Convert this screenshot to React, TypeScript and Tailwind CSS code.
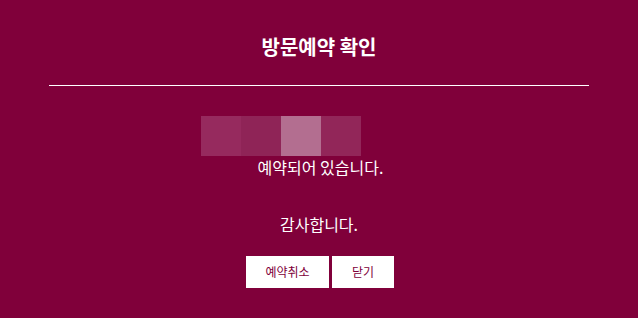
import React from 'react';

const tiles = ['bg-[#962a5e]', 'bg-[#8f2457]', 'bg-[#b36e90]', 'bg-[#922659]'];

export default function App() {
  return (
    <div
      className="w-[638px] h-[318px] bg-[#80003a] text-white flex flex-col items-center"
      style={{ fontFamily: '"Noto Sans CJK KR", "Noto Sans", sans-serif' }}
    >
      <h1 className="mt-[34px] text-[20px] leading-[26px] font-bold">방문예약 확인</h1>
      <div className="mt-[25px] w-[540px] h-px bg-white" />

      <div className="mt-[30px] flex ml-[-76px]">
        {tiles.map((c, i) => (
          <div key={i} className={`w-10 h-10 ${c}`} />
        ))}
      </div>
      <p className="mt-0 text-[16px] leading-[22px] ml-[3px]">예약되어 있습니다.</p>
      <p className="mt-[35px] text-[16px] leading-[22px]">감사합니다.</p>

      <div className="mt-[21px] flex gap-[3px] ml-[2px]">
        <button className="w-[83px] h-[32px] bg-white text-[#80003a] text-[12px]">예약취소</button>
        <button className="w-[62px] h-[32px] bg-white text-[#80003a] text-[12px]">닫기</button>
      </div>
    </div>
  );
}
